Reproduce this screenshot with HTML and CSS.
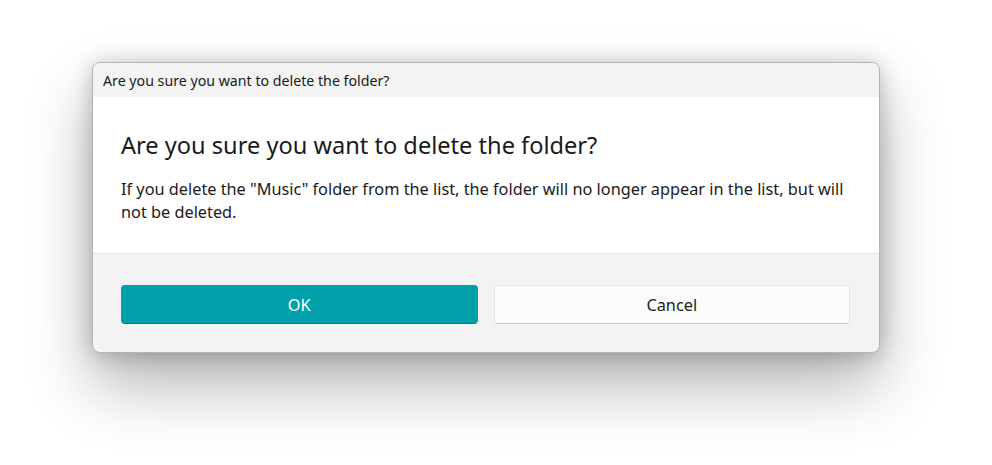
FILE: index.html
```html
<!DOCTYPE html>
<html lang="en">
<head>
<meta charset="utf-8">
<title>Dialog</title>
<link rel="stylesheet" href="styles.css">
</head>
<body>
<div class="stage">
  <div class="dialog">
    <div class="titlebar">Are you sure you want to delete the folder?</div>
    <div class="content">
      <h1 class="heading">Are you sure you want to delete the folder?</h1>
      <p class="message">If you delete the "Music" folder from the list, the folder will no longer appear in the list, but will not be deleted.</p>
    </div>
    <div class="footer">
      <button class="btn btn-primary">OK</button>
      <button class="btn btn-secondary">Cancel</button>
    </div>
  </div>
</div>
</body>
</html>
```
FILE: styles.css
```css
html, body {
  margin: 0;
  padding: 0;
  height: 100%;
  background: #ffffff;
}
body {
  font-family: "Noto Sans", "Open Sans", sans-serif;
  color: #1a1a1a;
  overflow: hidden;
}
.stage {
  box-sizing: border-box;
  height: 465px;
  padding: 62px 0 0 92px;
}
.dialog {
  width: 786px;
  height: 289px;
  border: 1px solid #b4b4b4;
  border-radius: 8px;
  background: #f3f3f3;
  overflow: hidden;
  display: flex;
  flex-direction: column;
  box-shadow: 0 32px 64px rgba(0,0,0,0.30), 0 2px 21px rgba(0,0,0,0.22);
}
.titlebar {
  height: 34px;
  flex: none;
  display: flex;
  align-items: center;
  padding-left: 10px;
  font-size: 14.2px;
  color: #1a1a1a;
  background: #f3f3f3;
}
.content {
  flex: none;
  background: #ffffff;
  height: 157px;
  padding: 0 18px 0 28px;
  border-bottom: 1px solid #e5e5e5;
  box-sizing: border-box;
  overflow: hidden;
}
.heading {
  margin: 34px 0 0 0;
  font-size: 23.6px;
  font-weight: 400;
  line-height: 28px;
  color: #1a1a1a;
}
.message {
  margin: 19px 0 0 0;
  font-size: 16.3px;
  line-height: 23px;
  color: #1a1a1a;
}
.footer {
  flex: 1;
  display: flex;
  gap: 16px;
  padding: 31px 29px 0 28px;
}
.btn {
  flex: 1;
  height: 39px;
  border-radius: 4px;
  font-family: inherit;
  font-size: 16.3px;
  cursor: pointer;
}
.btn-primary {
  background: #00a0aa;
  color: #ffffff;
  border: 1px solid #00a0aa;
  border-bottom-color: #00838b;
}
.btn-secondary {
  background: #fbfbfb;
  color: #1a1a1a;
  border: 1px solid #e5e5e5;
  border-bottom-color: #cdcdcd;
}
```
